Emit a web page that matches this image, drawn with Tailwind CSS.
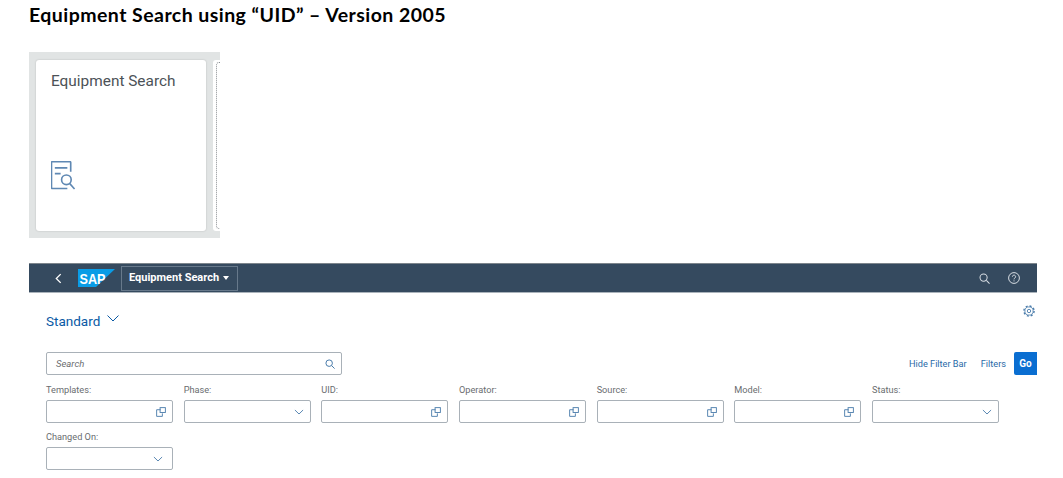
<!DOCTYPE html>
<html lang="en">
<head>
  <meta charset="UTF-8" />
  <title>Equipment Search</title>
  <script src="https://cdn.jsdelivr.net/npm/@tailwindcss/browser@4"></script>
</head>
<body class="bg-white w-[1063px] h-[478px] overflow-hidden font-['Roboto',sans-serif]">
  <div class="pl-[29px] w-[1037px]">
    <h1 class="pt-[2px] h-[52px] text-[19.5px] leading-[25px] tracking-[0.45px] font-bold text-black font-['Lato',sans-serif]">Equipment Search using “UID” – Version 2005</h1>

    <!-- launchpad tile -->
    <div class="w-[191px] h-[186px] bg-[#e1e4e4] pl-[7px] pt-[8px] flex gap-[7px] overflow-hidden">
      <div class="w-[170px] h-[171px] shrink-0 bg-white rounded-[3px] shadow-[0_0_2px_rgba(0,0,0,0.2)] pl-[15px] pt-[11px] flex flex-col">
        <div class="text-[15.4px] leading-[20px] text-[#4c5257]">Equipment Search</div>
        <svg class="mt-[70px]" width="25" height="29" viewBox="0 0 26 30" fill="none" stroke="#5f88b3" stroke-width="1.7">
          <path d="M20.5 11V1.5a1 1 0 0 0-1-1H1.5a1 1 0 0 0-1 1v26a1 1 0 0 0 1 1H17" />
          <path d="M4 7h13M4 13h6" />
          <circle cx="16" cy="19.5" r="5" />
          <path d="M19.5 23.5l5 5.5" />
        </svg>
      </div>
      <div class="w-[20px] h-[171px] shrink-0 bg-white rounded-[3px] pl-[3px] py-[2px]">
        <div class="h-full border border-dotted border-[#8a8f93] rounded-[3px]"></div>
      </div>
    </div>

    <!-- shell bar -->
    <div class="mt-[25px] h-[30px] bg-[#354a5f] border-t border-t-[#7d858c] border-b border-b-[#aab3bb] flex items-center text-white">
      <svg class="ml-[26px]" width="7" height="11" viewBox="0 0 8 12" fill="none" stroke="#ffffff" stroke-width="1.5"><path d="M6.5 1L1.5 6l5 5" /></svg>
      <svg class="ml-[16px]" width="37" height="18" viewBox="0 0 37 18">
        <polygon points="0,0 37,0 18,18 0,18" fill="#0a9ce6" />
        <text x="1.5" y="14.5" font-family="Liberation Sans, sans-serif" font-weight="700" font-size="15.5" fill="#ffffff" textLength="26" lengthAdjust="spacingAndGlyphs">SAP</text>
      </svg>
      <div class="ml-[6px] h-[25px] w-[117px] border border-[#67798b] flex items-center pl-[7px] gap-[4px] text-[11px] font-bold">
        <span>Equipment Search</span>
        <span class="w-0 h-0 border-x-[3.5px] border-x-transparent border-t-[4px] border-t-white"></span>
      </div>
      <svg class="ml-auto" width="11" height="11" viewBox="0 0 12 12" fill="none" stroke="#d7dde3" stroke-width="1.1"><circle cx="5" cy="5" r="3.9" /><path d="M8 8l3.5 3.5" /></svg>
      <svg class="ml-[18px] mr-[17px]" width="12" height="12" viewBox="0 0 12 12" fill="none" stroke="#d7dde3" stroke-width="1"><circle cx="6" cy="6" r="5.4" /><path d="M4.4 4.7a1.6 1.6 0 1 1 2.5 1.3c-.6.4-.9.7-.9 1.4M6 8.4v1" /></svg>
    </div>

    <!-- filter page -->
    <div class="pl-[17px]">
      <div class="flex items-start h-[59px]">
        <div class="pt-[19px] flex items-center gap-[7px] text-[#0a5aa5] text-[13.5px] leading-[18px]">
          <span>Standard</span>
          <svg class="mb-[5px]" width="12" height="7" viewBox="0 0 12 7" fill="none" stroke="#0a5aa5" stroke-width="1"><path d="M0.5 0.5L6 6l5.5-5.5" /></svg>
        </div>
        <svg class="ml-auto mt-[12px] mr-[2px]" width="12" height="12" viewBox="0 0 12 12" fill="none" stroke="#4a7cab">
          <circle cx="6" cy="6" r="5.1" stroke-width="1.4" stroke-dasharray="2 2" />
          <circle cx="6" cy="6" r="4.1" stroke-width="0.8" />
          <circle cx="6" cy="6" r="1.7" stroke-width="0.9" />
        </svg>
      </div>

      <div class="flex items-center h-[23px]">
        <div class="w-[296px] h-[23px] border border-[#a9b1b8] rounded-[2px] flex items-center pl-[9px] pr-[6px]">
          <span class="pt-[1px] text-[9.5px] italic text-[#6a6d70]">Search</span>
          <svg class="ml-auto" width="10" height="10" viewBox="0 0 12 12" fill="none" stroke="#4a7cab" stroke-width="1.2"><circle cx="5" cy="5" r="3.9" /><path d="M8 8l3.5 3.5" /></svg>
        </div>
        <span class="ml-auto pt-[1px] text-[9.2px] text-[#2a6aa8]">Hide Filter Bar</span>
        <span class="ml-[14px] pt-[1px] text-[9.2px] text-[#2a6aa8]">Filters</span>
        <button class="ml-[8px] w-[23px] h-[23px] bg-[#0a6ed1] text-white text-[10px] font-bold rounded-l-[2px]">Go</button>
      </div>

      <div class="mt-[6px] grid grid-cols-[repeat(7,127px)] gap-x-[10.67px] gap-y-[5px] text-[9.2px] leading-[13px] text-[#6a6d70]">
        <div>
          <label class="block h-[19px] pt-[2px]">Templates:</label>
          <div class="h-[23px] border border-[#a9b1b8] rounded-[2px] flex items-center justify-end pr-[6px]">
            <svg width="10" height="10" viewBox="0 0 11 11" fill="none" stroke="#4a7cab" stroke-width="1"><path d="M5 3H.7v7.3H7V7" /><rect x="4.5" y=".7" width="5.8" height="5.3" /></svg>
          </div>
        </div>
        <div>
          <label class="block h-[19px] pt-[2px]">Phase:</label>
          <div class="h-[23px] border border-[#a9b1b8] rounded-[2px] flex items-center justify-end pr-[6px]">
            <svg width="10" height="6" viewBox="0 0 11 6" fill="none" stroke="#4a7cab" stroke-width="1"><path d="M1 .8l4.5 4.4L10 .8" /></svg>
          </div>
        </div>
        <div>
          <label class="block h-[19px] pt-[2px]">UID:</label>
          <div class="h-[23px] border border-[#a9b1b8] rounded-[2px] flex items-center justify-end pr-[6px]">
            <svg width="10" height="10" viewBox="0 0 11 11" fill="none" stroke="#4a7cab" stroke-width="1"><path d="M5 3H.7v7.3H7V7" /><rect x="4.5" y=".7" width="5.8" height="5.3" /></svg>
          </div>
        </div>
        <div>
          <label class="block h-[19px] pt-[2px]">Operator:</label>
          <div class="h-[23px] border border-[#a9b1b8] rounded-[2px] flex items-center justify-end pr-[6px]">
            <svg width="10" height="10" viewBox="0 0 11 11" fill="none" stroke="#4a7cab" stroke-width="1"><path d="M5 3H.7v7.3H7V7" /><rect x="4.5" y=".7" width="5.8" height="5.3" /></svg>
          </div>
        </div>
        <div>
          <label class="block h-[19px] pt-[2px]">Source:</label>
          <div class="h-[23px] border border-[#a9b1b8] rounded-[2px] flex items-center justify-end pr-[6px]">
            <svg width="10" height="10" viewBox="0 0 11 11" fill="none" stroke="#4a7cab" stroke-width="1"><path d="M5 3H.7v7.3H7V7" /><rect x="4.5" y=".7" width="5.8" height="5.3" /></svg>
          </div>
        </div>
        <div>
          <label class="block h-[19px] pt-[2px]">Model:</label>
          <div class="h-[23px] border border-[#a9b1b8] rounded-[2px] flex items-center justify-end pr-[6px]">
            <svg width="10" height="10" viewBox="0 0 11 11" fill="none" stroke="#4a7cab" stroke-width="1"><path d="M5 3H.7v7.3H7V7" /><rect x="4.5" y=".7" width="5.8" height="5.3" /></svg>
          </div>
        </div>
        <div>
          <label class="block h-[19px] pt-[2px]">Status:</label>
          <div class="h-[23px] border border-[#a9b1b8] rounded-[2px] flex items-center justify-end pr-[6px]">
            <svg width="10" height="6" viewBox="0 0 11 6" fill="none" stroke="#4a7cab" stroke-width="1"><path d="M1 .8l4.5 4.4L10 .8" /></svg>
          </div>
        </div>
        <div>
          <label class="block h-[19px] pt-[2px]">Changed On:</label>
          <div class="h-[23px] border border-[#a9b1b8] rounded-[2px] flex items-center justify-end pr-[9px]">
            <svg width="10" height="6" viewBox="0 0 11 6" fill="none" stroke="#4a7cab" stroke-width="1"><path d="M1 .8l4.5 4.4L10 .8" /></svg>
          </div>
        </div>
      </div>
    </div>
  </div>
</body>
</html>
